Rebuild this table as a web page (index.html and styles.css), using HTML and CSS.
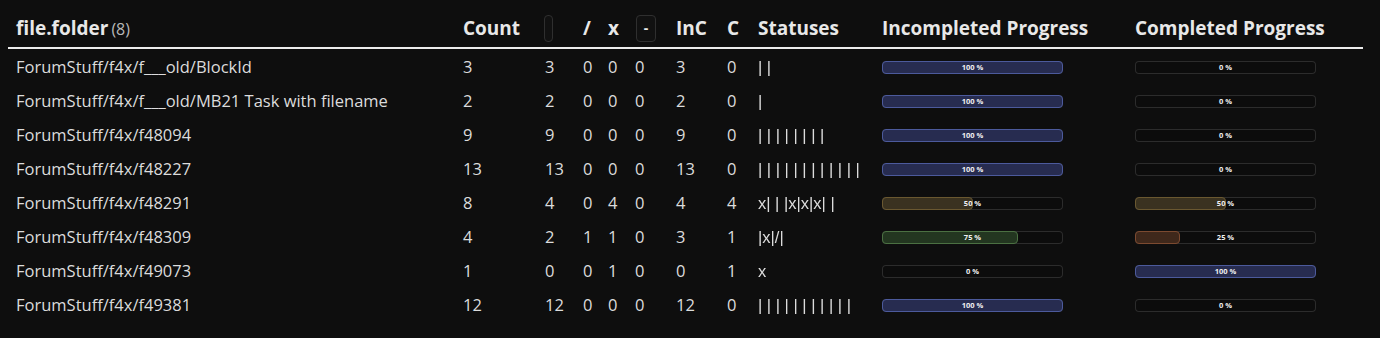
FILE: index.html
```html
<!DOCTYPE html>
<html>
<head>
<meta charset="utf-8">
<link rel="stylesheet" href="styles.css">
</head>
<body>
<table class="tbl">
  <colgroup>
    <col class="c-folder"><col class="c-count"><col class="c-blank"><col class="c-slash"><col class="c-x"><col class="c-dash"><col class="c-inc"><col class="c-c"><col class="c-stat"><col class="c-ip"><col class="c-cp">
  </colgroup>
  <thead>
    <tr>
      <th>file.folder<span class="cnt">(8)</span></th>
      <th>Count</th>
      <th><span class="kbd blank"></span></th>
      <th>/</th>
      <th>x</th>
      <th><span class="kbd">-</span></th>
      <th>InC</th>
      <th>C</th>
      <th>Statuses</th>
      <th>Incompleted Progress</th>
      <th>Completed Progress</th>
    </tr>
  </thead>
  <tbody>
    <tr>
      <td>ForumStuff/f4x/f___old/BlockId</td><td>3</td><td>3</td><td>0</td><td>0</td><td>0</td><td>3</td><td>0</td><td class="st"><span>| |</span></td>
      <td><div class="bar"><div class="fill blue" style="width:100%"></div><span class="lbl">100 %</span></div></td>
      <td><div class="bar"><div class="fill" style="width:0%"></div><span class="lbl">0 %</span></div></td>
    </tr>
    <tr>
      <td>ForumStuff/f4x/f___old/MB21 Task with filename</td><td>2</td><td>2</td><td>0</td><td>0</td><td>0</td><td>2</td><td>0</td><td class="st"><span>|</span></td>
      <td><div class="bar"><div class="fill blue" style="width:100%"></div><span class="lbl">100 %</span></div></td>
      <td><div class="bar"><div class="fill" style="width:0%"></div><span class="lbl">0 %</span></div></td>
    </tr>
    <tr>
      <td>ForumStuff/f4x/f48094</td><td>9</td><td>9</td><td>0</td><td>0</td><td>0</td><td>9</td><td>0</td><td class="st"><span>| | | | | | | |</span></td>
      <td><div class="bar"><div class="fill blue" style="width:100%"></div><span class="lbl">100 %</span></div></td>
      <td><div class="bar"><div class="fill" style="width:0%"></div><span class="lbl">0 %</span></div></td>
    </tr>
    <tr>
      <td>ForumStuff/f4x/f48227</td><td>13</td><td>13</td><td>0</td><td>0</td><td>0</td><td>13</td><td>0</td><td class="st"><span>| | | | | | | | | | | |</span></td>
      <td><div class="bar"><div class="fill blue" style="width:100%"></div><span class="lbl">100 %</span></div></td>
      <td><div class="bar"><div class="fill" style="width:0%"></div><span class="lbl">0 %</span></div></td>
    </tr>
    <tr>
      <td>ForumStuff/f4x/f48291</td><td>8</td><td>4</td><td>0</td><td>4</td><td>0</td><td>4</td><td>4</td><td class="st"><span>x| | |x|x|x| |</span></td>
      <td><div class="bar"><div class="fill yellow" style="width:50%"></div><span class="lbl">50 %</span></div></td>
      <td><div class="bar"><div class="fill yellow" style="width:50%"></div><span class="lbl">50 %</span></div></td>
    </tr>
    <tr>
      <td>ForumStuff/f4x/f48309</td><td>4</td><td>2</td><td>1</td><td>1</td><td>0</td><td>3</td><td>1</td><td class="st"><span>|x|/|</span></td>
      <td><div class="bar"><div class="fill green" style="width:75%"></div><span class="lbl">75 %</span></div></td>
      <td><div class="bar"><div class="fill brown" style="width:25%"></div><span class="lbl">25 %</span></div></td>
    </tr>
    <tr>
      <td>ForumStuff/f4x/f49073</td><td>1</td><td>0</td><td>0</td><td>1</td><td>0</td><td>0</td><td>1</td><td class="st"><span>x</span></td>
      <td><div class="bar"><div class="fill" style="width:0%"></div><span class="lbl">0 %</span></div></td>
      <td><div class="bar"><div class="fill blue" style="width:100%"></div><span class="lbl">100 %</span></div></td>
    </tr>
    <tr>
      <td>ForumStuff/f4x/f49381</td><td>12</td><td>12</td><td>0</td><td>0</td><td>0</td><td>12</td><td>0</td><td class="st"><span>| | | | | | | | | | |</span></td>
      <td><div class="bar"><div class="fill blue" style="width:100%"></div><span class="lbl">100 %</span></div></td>
      <td><div class="bar"><div class="fill" style="width:0%"></div><span class="lbl">0 %</span></div></td>
    </tr>
  </tbody>
</table>
</body>
</html>
```
FILE: styles.css
```css
html, body {
  background: #0e0e0e;
}
body {
  margin: 8px;
  font-family: "Open Sans", "Noto Sans", sans-serif;
  color: #dcdcdc;
}
.tbl {
  border-collapse: collapse;
  table-layout: fixed;
  width: 1355px;
}
.c-folder { width: 447px; }
.c-count { width: 82px; }
.c-blank { width: 38px; }
.c-slash { width: 25px; }
.c-x { width: 27px; }
.c-dash { width: 41px; }
.c-inc { width: 51px; }
.c-c { width: 31px; }
.c-stat { width: 124px; }
.c-ip { width: 253px; }
.c-cp { width: 236px; }

th {
  height: 39px;
  padding: 0 0 0 8px;
  text-align: left;
  font-size: 19px;
  font-weight: 700;
  color: #e8e8e8;
  border-bottom: 2px solid #ececec;
  white-space: nowrap;
}
.cnt {
  font-size: 16px;
  font-weight: 400;
  color: #b8b8b8;
  margin-left: 3px;
}
.kbd {
  display: inline-block;
  box-sizing: border-box;
  min-width: 20px;
  height: 27px;
  line-height: 24px;
  padding: 0 6px;
  border: 1px solid #2f2f2f;
  border-radius: 4px;
  background: #111;
  font-size: 14px;
  text-align: center;
  vertical-align: middle;
  margin-left: 1px;
}
.kbd.blank {
  min-width: 0;
  width: 9px;
  padding: 0;
  margin-left: -1px;
}
td {
  height: 32px;
  padding: 2px 0 0 8px;
  font-size: 16.5px;
  line-height: 22px;
  white-space: nowrap;
}
.st span {
  display: inline-block;
  font-family: "Liberation Sans", sans-serif;
  font-size: 16.5px;
  filter: grayscale(1);
  white-space: pre;
}
.bar {
  position: relative;
  width: 181px;
  height: 13px;
  border-radius: 4px;
  background: #0c0c0c;
  box-shadow: inset 0 0 0 1px #2c2c2c;
}
.fill {
  box-sizing: border-box;
  height: 13px;
  border-radius: 4px;
}
.fill.blue { background: #272c50; border: 1px solid #4c5a9c; }
.fill.yellow { background: #3a3220; border: 1px solid #6a5830; }
.fill.green { background: #233620; border: 1px solid #4b7042; }
.fill.brown { background: #3f281b; border: 1px solid #7c4a30; }
.lbl {
  position: absolute;
  left: 0;
  right: 0;
  top: 0;
  bottom: 0;
  display: flex;
  align-items: center;
  justify-content: center;
  font-size: 7.5px;
  font-weight: 700;
  color: #f0f0f0;
}
```
